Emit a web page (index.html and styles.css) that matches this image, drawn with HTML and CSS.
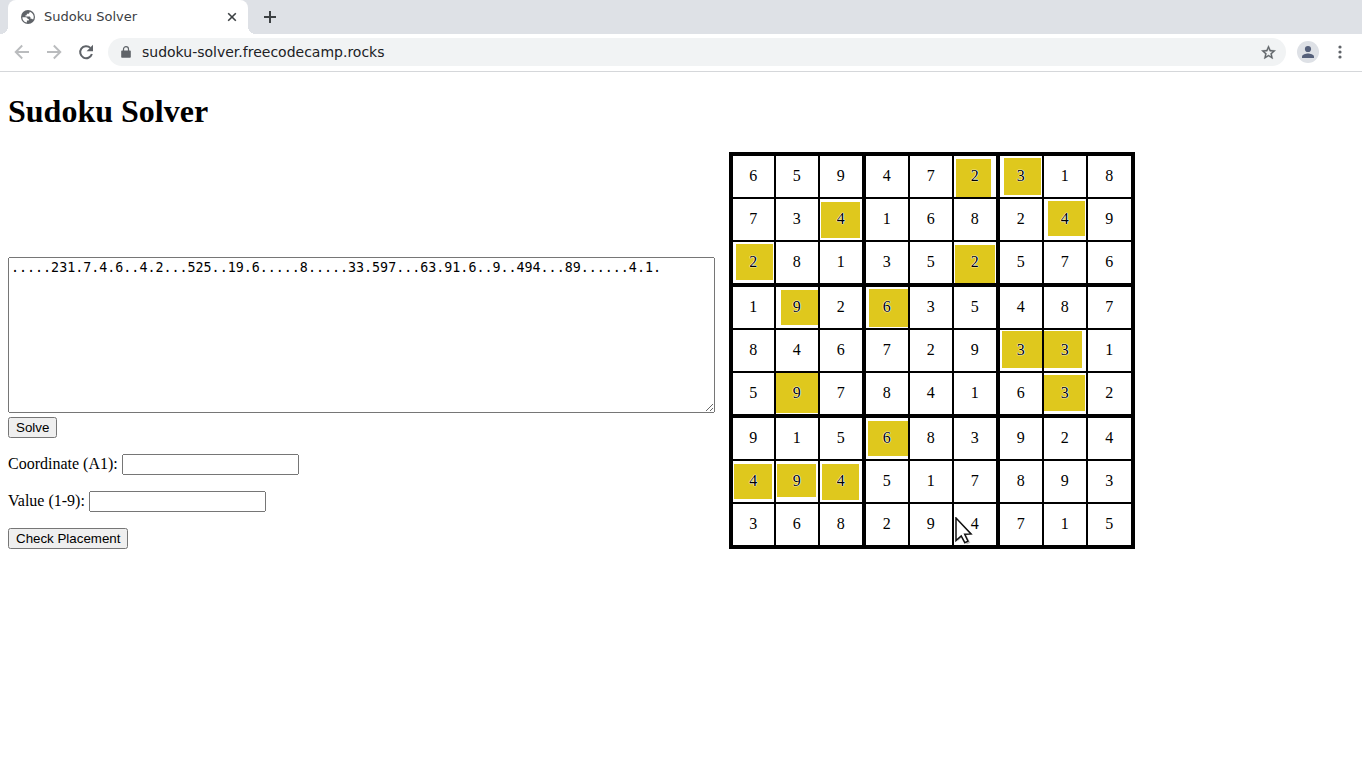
FILE: index.html
```html
<!DOCTYPE html>
<html lang="en">
<head>
    <meta charset="UTF-8">
    <meta name="viewport" content="width=device-width, initial-scale=1.0">
    <link rel="stylesheet" href="styles.css">
    <title>Sudoku Solver</title>
</head>
<body>
    <header class="browser">
        <div class="tabs">
            <div class="tab">
                <svg class="globe" viewBox="0 0 14 14" width="14" height="14">
                    <circle cx="7" cy="7" r="7" fill="#5f6368"/>
                    <path d="M1.4 7.2h3.2c1.6 0 2 .8 2 1.7h1.2v1.7H5.9v1.8C3.3 12.1 1.3 9.9 1.4 7.2zM8.6 1.7v.6c0 .9-.7 1.5-1.5 1.5H5.8v1.5H4.5v1.2h3.7c.8 0 1.3.6 1.3 1.3v1h1.1c.7 0 1.2.3 1.4.9 1.9-3.1.2-6.8-3.4-8z" fill="#fff"/>
                </svg>
                <span class="tabTitle">Sudoku Solver</span>
                <button class="iconBtn closeTab" aria-label="Close tab">
                    <svg viewBox="0 0 10 10" width="10" height="10"><path d="M1.2 1.2l7.6 7.6M8.8 1.2L1.2 8.8" stroke="#3c4043" stroke-width="1.6"/></svg>
                </button>
            </div>
            <button class="iconBtn newTab" aria-label="New tab">
                <svg viewBox="0 0 12 12" width="12" height="12"><path d="M6 0v12M0 6h12" stroke="#3c4043" stroke-width="2"/></svg>
            </button>
        </div>
        <div class="toolbar">
            <button class="iconBtn" aria-label="Back">
                <svg viewBox="0 0 16 16" width="16" height="16"><path d="M15 8H2M8.2 1.5L1.7 8l6.5 6.5" fill="none" stroke="#babcbe" stroke-width="1.9"/></svg>
            </button>
            <button class="iconBtn" aria-label="Forward">
                <svg viewBox="0 0 16 16" width="16" height="16"><path d="M1 8h13M7.8 1.5L14.3 8l-6.5 6.5" fill="none" stroke="#babcbe" stroke-width="1.9"/></svg>
            </button>
            <button class="iconBtn" aria-label="Reload">
                <svg viewBox="0 0 16 16" width="16" height="16"><path d="M13.9 10A6 6 0 1 1 12.4 3.9" fill="none" stroke="#5f6368" stroke-width="2"/><path d="M15 .8v6.4H8.6z" fill="#5f6368"/></svg>
            </button>
            <div class="addressBar">
                <svg viewBox="0 0 10 12" width="10" height="12"><path d="M1 4.4h8q.8 0 .8.8V11q0 .8-.8.8H1q-.8 0-.8-.8V5.2q0-.8.8-.8z" fill="#5f6368"/><path d="M2.5 5V3a2.5 2.3 0 0 1 5 0v2" fill="none" stroke="#5f6368" stroke-width="1.2"/></svg>
                <input type="text" class="url" aria-label="Address" value="sudoku-solver.freecodecamp.rocks">
                <button class="iconBtn star" aria-label="Bookmark">
                    <svg viewBox="0 0 24 24" width="17" height="17"><path d="M22 9.24l-7.19-.62L12 2 9.19 8.63 2 9.24l5.46 4.73L5.82 21 12 17.27 18.18 21l-1.63-7.03L22 9.24zM12 15.4l-3.76 2.27 1-4.28-3.32-2.88 4.38-.38L12 6.1l1.71 4.04 4.38.38-3.32 2.88 1 4.28L12 15.4z" fill="#5f6368" stroke="#5f6368" stroke-width=".5"/></svg>
                </button>
            </div>
            <button class="iconBtn profile" aria-label="Profile">
                <svg viewBox="0 0 22 22" width="22" height="22"><circle cx="11" cy="11" r="11" fill="#dee1e6"/><circle cx="11" cy="8" r="3.1" fill="#55607a"/><path d="M5 17v-1.6c0-2 4-3 6-3s6 1 6 3V17z" fill="#55607a"/></svg>
            </button>
            <button class="iconBtn menu" aria-label="Menu">
                <svg viewBox="0 0 4 14" width="4" height="14"><g fill="#5f6368"><circle cx="2" cy="2" r="1.6"/><circle cx="2" cy="7" r="1.6"/><circle cx="2" cy="12" r="1.6"/></g></svg>
            </button>
        </div>
    </header>

    <main>
        <h1>Sudoku Solver</h1>
        <div class="container">
            <div class="forms">
                <form id="solve-form">
                    <textarea id="text-input" rows="10" aria-label="Puzzle" spellcheck="false">.....231.7.4.6..4.2...525..19.6.....8.....33.597...63.91.6..9..494...89......4.1.</textarea>
                    <button type="button" id="solve-button">Solve</button>
                </form>
                <form id="check-form">
                    <p><label for="coord">Coordinate (A1):</label> <input type="text" id="coord" name="coordinate"></p>
                    <p><label for="val">Value (1-9):</label> <input type="text" id="val" name="value"></p>
                    <button type="button" id="check-button">Check Placement</button>
                </form>
            </div>
            <div class="board">
                <table>
                    <colgroup>
                        <col class="edge"><col><col class="block">
                        <col><col><col class="block">
                        <col><col><col class="edge">
                    </colgroup>
                    <tbody id="grid"></tbody>
                </table>
                <svg class="cursor" viewBox="0 0 20 30" width="20" height="30"><path d="M1.8 2v21l5-4.5 4 8 3.5-1.8-4-7.7 6.4-.3z" fill="#888" opacity=".5" transform="translate(1 1)"/><path d="M1 1v22.5l5.2-4.6 3.6 6.8 3.2-1.6-3.3-6.8 6.3-.4z" fill="#fff" stroke="#111" stroke-width="1.5"/></svg>
            </div>
        </div>
    </main>

    <script>
        const solution = [
            '659472318',
            '734168249',
            '281352576',
            '192635487',
            '846729331',
            '597841632',
            '915683924',
            '494517893',
            '368294715'
        ];
        //highlighted cells, with the space left on each side (top right bottom left)
        const marks = {
            A6: [3, 5, 0, 2], A7: [2, 1, 2, 4],
            B3: [3, 2, 2, 1], B8: [2, 1, 4, 4],
            C1: [2, 1, 3, 3], C6: [3, 1, 0, 1],
            D2: [3, 0, 3, 5], D4: [2, 0, 1, 3],
            E7: [1, 0, 3, 2], E8: [1, 4, 3, 0],
            F2: [0, 0, 1, 0], F8: [2, 1, 3, 0],
            G4: [3, 0, 3, 2],
            H1: [3, 2, 3, 1], H2: [3, 2, 5, 1], H3: [3, 3, 2, 2]
        };
        const grid = document.querySelector('#grid');

        solution.forEach((digits, row) => {
            const tr = document.createElement('tr');
            [...digits].forEach((digit, col) => {
                const td = document.createElement('td');
                const mark = marks['ABCDEFGHI'[row] + (col + 1)];
                td.textContent = digit;
                if (mark) {
                    td.className = 'marked';
                    td.style.setProperty('--space', mark.map(n => n + 'px').join(' '));
                }
                tr.appendChild(td);
            });
            grid.appendChild(tr);
        });
    </script>
</body>
</html>
```
FILE: styles.css
```css
body {
    margin: 0;
    background: #fff;
    color: #000;
    font-family: "Liberation Serif", serif;
    font-size: 16px;
}

/* browser bar */
.browser {
    font-family: "DejaVu Sans", sans-serif;
    border-bottom: 1px solid #d5d7da;
}
.tabs {
    display: flex;
    align-items: center;
    height: 34px;
    padding-left: 8px;
    background: #dee1e6;
}
.tab {
    box-sizing: border-box;
    display: flex;
    align-items: center;
    width: 240px;
    height: 34px;
    padding: 0 11px 0 13px;
    background: #fff;
    border-radius: 8px 8px 0 0;
    position: relative;
}
/* curved feet of the tab */
.tab::before,
.tab::after {
    content: "";
    position: absolute;
    bottom: 0;
    width: 8px;
    height: 8px;
}
.tab::before {
    left: -8px;
    background: radial-gradient(circle at 0 0, #dee1e6 8px, #fff 8px);
}
.tab::after {
    right: -8px;
    background: radial-gradient(circle at 100% 0, #dee1e6 8px, #fff 8px);
}
.tabTitle {
    flex: 1;
    margin-left: 9px;
    padding-bottom: 1px;
    font-size: 13px;
    color: #3c4043;
}
.iconBtn {
    display: flex;
    align-items: center;
    justify-content: center;
    padding: 0;
    border: none;
    background: none;
    cursor: pointer;
}
.newTab {
    margin-left: 16px;
}
.toolbar {
    box-sizing: border-box;
    display: flex;
    align-items: center;
    gap: 16px;
    height: 37px;
    padding: 0 20px 1px 14px;
}
.addressBar {
    box-sizing: border-box;
    flex: 1;
    display: flex;
    align-items: center;
    height: 28px;
    padding: 0 9px 0 13px;
    margin-right: -5px;
    margin-left: -2px;
    background: #f1f3f4;
    border-radius: 14px;
}
.profile {
    margin-right: 3px;
}
.url {
    flex: 1;
    margin-left: 11px;
    padding: 0;
    border: none;
    outline: none;
    background: none;
    font-family: inherit;
    font-size: 14px;
    color: #202124;
}

/* page */
main {
    padding: 0 8px;
}
h1 {
    margin: 21px 0 23px;
    font-size: 32px;
    line-height: 36px;
}
.container {
    display: flex;
    align-items: flex-end;
    gap: 14px;
}
.forms {
    flex: 0 0 52.5%;
}
textarea {
    box-sizing: border-box;
    display: block;
    width: 100%;
    height: 156px;
    margin: 0 0 4px;
    font-family: "DejaVu Sans Mono", monospace;
}
.forms button,
.forms p input {
    box-sizing: border-box;
    height: 21px;
    font-family: "Liberation Sans", sans-serif;
}
.forms button {
    display: block;
}
.forms p {
    height: 21px;
    line-height: 18px;
    margin: 16px 0;
}
.forms p input {
    width: 177px;
}

/* sudoku grid */
.board {
    position: relative;
}
table {
    table-layout: fixed;
    width: 406px;
    border: 4px solid #000;
    border-spacing: 0;
}
col {
    width: 44px;
}
.edge {
    width: 43px;
}
.block {
    width: 46px;
}
td {
    box-sizing: border-box;
    height: 43px;
    padding: 0 0 2px;
    border: 0 solid #000;
    border-width: 0 2px 2px 0;
    text-align: center;
    position: relative;
}
td:nth-child(3n) {
    border-right-width: 4px;
}
tr:nth-child(3n) td {
    height: 45px;
    border-bottom-width: 4px;
}
td:last-child {
    border-right-width: 0;
}
tr:last-child td {
    height: 41px;
    border-bottom-width: 0;
}
.marked {
    z-index: 0;
    text-shadow: 0 0 1px #fff, 0 0 1px #fff, 0 0 1px #fff, 0 0 1px #fff;
}
.marked::before {
    content: "";
    position: absolute;
    inset: var(--space);
    z-index: -1;
    background: #dfc81d;
}
.cursor {
    position: absolute;
    left: 226px;
    top: 365px;
}
```
